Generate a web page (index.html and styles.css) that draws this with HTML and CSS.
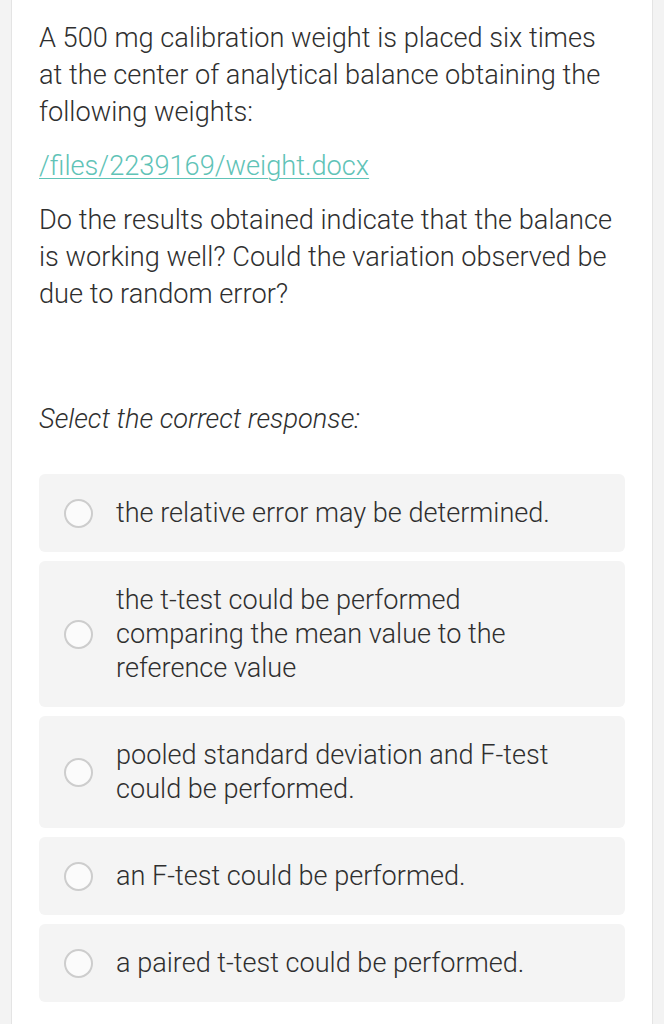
FILE: index.html
```html
<!DOCTYPE html>
<html>
<head>
<meta charset="utf-8">
<link rel="stylesheet" href="styles.css">
</head>
<body>
<div class="page">
  <p class="para">A 500 mg calibration weight is placed six times at the center of analytical balance obtaining the following weights:</p>
  <p class="para"><a class="file-link" href="#">/files/2239169/weight.docx</a></p>
  <p class="para">Do the results obtained indicate that the balance is working well? Could the variation observed be due to random error?</p>
  <p class="prompt">Select the correct response:</p>
  <div class="options">
    <label class="option"><span class="radio"></span><span class="option-text">the relative error may be determined.</span></label>
    <label class="option"><span class="radio"></span><span class="option-text">the t-test could be performed comparing the mean value to the reference value</span></label>
    <label class="option"><span class="radio"></span><span class="option-text">pooled standard deviation and F-test could be performed.</span></label>
    <label class="option"><span class="radio"></span><span class="option-text">an F-test could be performed.</span></label>
    <label class="option"><span class="radio"></span><span class="option-text">a paired t-test could be performed.</span></label>
  </div>
</div>
</body>
</html>
```
FILE: styles.css
```css
html, body {
  margin: 0;
  padding: 0;
  background: #f3f3f3;
}
body {
  font-family: Roboto, "Noto Sans", sans-serif;
  font-weight: 300;
  color: #2f2f2f;
}
.page {
  margin: 0 11px;
  min-height: 1024px;
  box-sizing: border-box;
  background: #ffffff;
  border-left: 1px solid #e4e4e4;
  border-right: 1px solid #e4e4e4;
  padding: 20px 27px 20px 27px;
}
.para {
  margin: 0 0 17px 0;
  font-size: 27.2px;
  line-height: 37px;
  width: 576px;
}
.file-link {
  color: #5fc3b7;
  text-decoration: underline;
  text-underline-offset: 3px;
  text-decoration-thickness: 1px;
}
.prompt {
  margin: 88px 0 0 0;
  font-size: 27.2px;
  line-height: 37px;
  font-style: italic;
}
.options {
  margin-top: 36px;
  display: flex;
  flex-direction: column;
  gap: 9px;
  width: 586px;
}
.option {
  display: flex;
  align-items: center;
  background: #f4f4f4;
  border-radius: 6px;
  padding: 22px 20px 22px 25px;
}
.radio {
  flex: none;
  box-sizing: border-box;
  width: 29px;
  height: 29px;
  border: 2px solid #cdcdcd;
  border-radius: 50%;
  background: #fbfbfb;
  margin-right: 23px;
}
.option-text {
  font-size: 27.1px;
  line-height: 34px;
  width: 440px;
}
```
